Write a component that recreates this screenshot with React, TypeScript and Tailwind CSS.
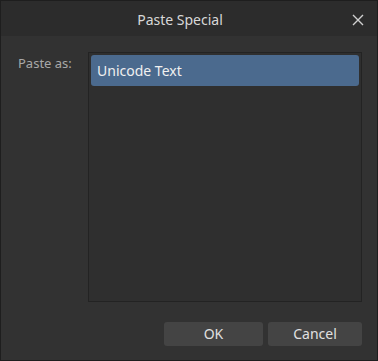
import React from "react";

export default function App() {
  const font = { fontFamily: '"Noto Sans", "Open Sans", sans-serif' };
  return (
    <div className="w-[378px] h-[361px] flex flex-col bg-[#323232] border border-[#1e1e1e] text-[13px]" style={font}>
      <div className="h-[35px] flex items-center justify-center relative bg-[#2c2c2c] shrink-0 pr-[18px] pt-[2px]">
        <span className="text-[14px] text-[#d8d8d8]">Paste Special</span>
        <svg className="absolute right-[13px] top-[13px]" width="12" height="12" viewBox="0 0 12 12">
          <path d="M1 1 L11 11 M11 1 L1 11" stroke="#d0d0d0" strokeWidth="1.4" />
        </svg>
      </div>
      <div className="flex flex-1 pt-[16px] pl-[17px] pr-[15px]">
        <div className="w-[70px] text-[#a8a8a8] pt-[1px] leading-[20px]">Paste as:</div>
        <div className="flex-1 h-[250px] border border-[#232323] bg-[#2f2f2f] p-[2px]">
          <div className="h-[31px] rounded-[3px] bg-[#4b6a8e] text-[#f0f0f0] text-[14px] flex items-center pl-[6px]">
            Unicode Text
          </div>
        </div>
      </div>
      <div className="flex justify-end gap-[5px] pr-[15px] pb-[14px]">
        <button className="w-[99px] h-[24px] rounded-[3px] bg-[#444444] text-[#e0e0e0] text-[14px] leading-none">OK</button>
        <button className="w-[94px] h-[24px] rounded-[3px] bg-[#444444] text-[#e0e0e0] text-[14px] leading-none">Cancel</button>
      </div>
    </div>
  );
}
